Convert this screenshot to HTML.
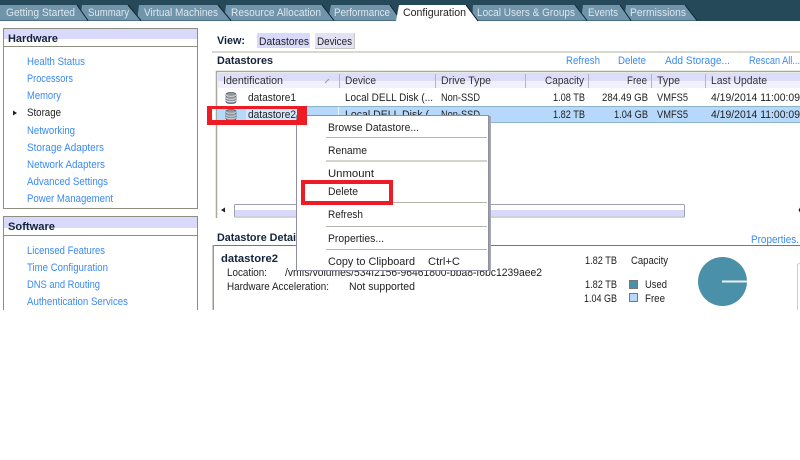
<!DOCTYPE html>
<html><head><meta charset="utf-8"><style>
html,body{margin:0;padding:0;background:#fff;width:800px;height:460px;overflow:hidden}
svg{display:block}
text{font-family:"Liberation Sans",sans-serif;font-size:11px;fill:#222;white-space:pre}
.t{fill:#dce7ee}
.b{font-weight:bold;fill:#14233c}
.l{fill:#3b8af0}
.h{fill:#333}
</style></head><body>
<svg width="800" height="460" viewBox="0 0 800 460" xmlns="http://www.w3.org/2000/svg">
<rect x="0" y="0" width="800" height="21" fill="#26495a"/>
<g fill="#7094aa">
<path d="M0 5H77L88 20.500H0Z"/>
<path d="M80 20.500L82 5H128L141 20.500Z"/>
<path d="M137 20.500L139 5H218L231 20.500Z"/>
<path d="M224 20.500L226 5H322L334 20.500Z"/>
<path d="M328 20.500L331 5H390L401 20.500Z"/>
<path d="M472 20.500L473 5H575L587 20.500Z"/>
<path d="M581 20.500L583 5H620L631 20.500Z"/>
<path d="M624 20.500L626 5H685L697 20.500Z"/>
</g>
<g stroke="#10242e" stroke-width="1" fill="none">
<path d="M77 5L88 20.500M128 5L141 20.500M218 5L231 20.500M322 5L334 20.500M390 5L401 20.500M575 5L587 20.500M620 5L631 20.500M685 5L697 20.500"/>
</g>
<path d="M396 21L399 5H466L478 21Z" fill="#fff"/>
<path d="M466 5L478 21" stroke="#111" stroke-width="1" fill="none"/>
<text lengthAdjust="spacingAndGlyphs" class="t" x="6" y="16" textLength="69">Getting Started</text>
<text lengthAdjust="spacingAndGlyphs" class="t" x="88" y="16" textLength="41">Summary</text>
<text lengthAdjust="spacingAndGlyphs" class="t" x="144" y="16" textLength="74">Virtual Machines</text>
<text lengthAdjust="spacingAndGlyphs" class="t" x="231" y="16" textLength="90">Resource Allocation</text>
<text lengthAdjust="spacingAndGlyphs" class="t" x="334" y="16" textLength="56">Performance</text>
<text lengthAdjust="spacingAndGlyphs" x="403" y="16" textLength="63">Configuration</text>
<text lengthAdjust="spacingAndGlyphs" class="t" x="477" y="16" textLength="98">Local Users &amp; Groups</text>
<text lengthAdjust="spacingAndGlyphs" class="t" x="588" y="16" textLength="30">Events</text>
<text lengthAdjust="spacingAndGlyphs" class="t" x="630" y="16" textLength="56">Permissions</text>

<rect x="3.500" y="28.500" width="194" height="180" fill="#fff" stroke="#8e8e80"/>
<rect x="4" y="29" width="193" height="10" fill="#d9d9fb"/>
<rect x="4" y="46" width="193" height="1" fill="#8e8e80"/>
<text lengthAdjust="spacingAndGlyphs" class="b" x="8" y="42" textLength="50">Hardware</text>
<text lengthAdjust="spacingAndGlyphs" class="l" x="27" y="65" textLength="58">Health Status</text>
<text lengthAdjust="spacingAndGlyphs" class="l" x="27" y="82" textLength="46">Processors</text>
<text lengthAdjust="spacingAndGlyphs" class="l" x="27" y="99" textLength="34">Memory</text>
<text lengthAdjust="spacingAndGlyphs" x="27" y="116" textLength="34">Storage</text>
<text lengthAdjust="spacingAndGlyphs" class="l" x="27" y="134" textLength="48">Networking</text>
<text lengthAdjust="spacingAndGlyphs" class="l" x="27" y="151" textLength="77">Storage Adapters</text>
<text lengthAdjust="spacingAndGlyphs" class="l" x="27" y="168" textLength="78">Network Adapters</text>
<text lengthAdjust="spacingAndGlyphs" class="l" x="27" y="185" textLength="81">Advanced Settings</text>
<text lengthAdjust="spacingAndGlyphs" class="l" x="27" y="202" textLength="86">Power Management</text>
<path d="M13 110.500L17 113L13 115.500Z" fill="#222"/>

<path d="M3.500 312V216.500H197.500V312" fill="#fff" stroke="#8e8e80"/>
<rect x="4" y="217" width="193" height="11" fill="#d9d9fb"/>
<rect x="4" y="235" width="193" height="1" fill="#8e8e80"/>
<text lengthAdjust="spacingAndGlyphs" class="b" x="8" y="230" textLength="47">Software</text>
<text lengthAdjust="spacingAndGlyphs" class="l" x="27" y="254" textLength="78">Licensed Features</text>
<text lengthAdjust="spacingAndGlyphs" class="l" x="27" y="271" textLength="81">Time Configuration</text>
<text lengthAdjust="spacingAndGlyphs" class="l" x="27" y="288" textLength="73">DNS and Routing</text>
<text lengthAdjust="spacingAndGlyphs" class="l" x="27" y="305" textLength="101">Authentication Services</text>

<text lengthAdjust="spacingAndGlyphs" class="b" x="217" y="44" textLength="28">View:</text>
<rect x="257" y="33" width="53" height="15" fill="#d9d9fb"/>
<rect x="315" y="33" width="39" height="15" fill="#e2e2f6"/>
<path d="M354.500 33V48.500H315" stroke="#c8c8c0" fill="none"/>
<text lengthAdjust="spacingAndGlyphs" x="259" y="45" textLength="50">Datastores</text>
<text lengthAdjust="spacingAndGlyphs" x="317" y="45" textLength="35">Devices</text>
<rect x="212" y="51" width="588" height="2" fill="#d8d8d0"/>
<text lengthAdjust="spacingAndGlyphs" class="b" x="217" y="64" textLength="56">Datastores</text>
<text lengthAdjust="spacingAndGlyphs" class="l" x="566" y="64" textLength="34">Refresh</text>
<text lengthAdjust="spacingAndGlyphs" class="l" x="618" y="64" textLength="28">Delete</text>
<text lengthAdjust="spacingAndGlyphs" class="l" x="665" y="64" textLength="65">Add Storage...</text>
<text lengthAdjust="spacingAndGlyphs" class="l" x="749" y="64" textLength="51">Rescan All...</text>

<path d="M216.500 218V71.500H800" fill="none" stroke="#a8a89c" stroke-width="1.500"/>
<rect x="218" y="73" width="582" height="8" fill="#dcdcfb"/>
<rect x="218" y="81" width="582" height="7" fill="#f1f1fd"/>
<g fill="#b4b4c4"><rect x="339" y="74" width="1" height="14"/><rect x="435" y="74" width="1" height="14"/><rect x="525" y="74" width="1" height="14"/><rect x="588" y="74" width="1" height="14"/><rect x="651" y="74" width="1" height="14"/><rect x="705" y="74" width="1" height="14"/></g>
<text lengthAdjust="spacingAndGlyphs" class="h" x="223" y="84" textLength="60">Identification</text>
<path d="M325 83L329 79" stroke="#999" fill="none"/>
<text lengthAdjust="spacingAndGlyphs" class="h" x="345" y="84" textLength="31">Device</text>
<text lengthAdjust="spacingAndGlyphs" class="h" x="441" y="84" textLength="50">Drive Type</text>
<text lengthAdjust="spacingAndGlyphs" class="h" x="545" y="84" textLength="39">Capacity</text>
<text lengthAdjust="spacingAndGlyphs" class="h" x="627" y="84" textLength="20">Free</text>
<text lengthAdjust="spacingAndGlyphs" class="h" x="657" y="84" textLength="23">Type</text>
<text lengthAdjust="spacingAndGlyphs" class="h" x="711" y="84" textLength="56">Last Update</text>

<text lengthAdjust="spacingAndGlyphs" x="248" y="101" textLength="48">datastore1</text>
<text lengthAdjust="spacingAndGlyphs" x="345" y="101" textLength="88">Local DELL Disk (...</text>
<text lengthAdjust="spacingAndGlyphs" x="441" y="101" textLength="39">Non-SSD</text>
<text lengthAdjust="spacingAndGlyphs" x="553" y="101" textLength="32">1.08 TB</text>
<text lengthAdjust="spacingAndGlyphs" x="602" y="101" textLength="46">284.49 GB</text>
<text lengthAdjust="spacingAndGlyphs" x="657" y="101" textLength="31">VMFS5</text>
<text lengthAdjust="spacingAndGlyphs" x="711" y="101" textLength="89">4/19/2014 11:00:09</text>

<rect x="217" y="107" width="583" height="15" fill="#b6d8fb"/>
<rect x="217" y="106" width="583" height="1" fill="#8db4c8"/>
<rect x="217" y="122" width="583" height="1" fill="#8db4c8"/>
<rect x="246" y="108" width="52" height="13" fill="#d4e6fb"/>
<rect x="338" y="107" width="1" height="15" fill="#eef6ff"/>
<text lengthAdjust="spacingAndGlyphs" x="248" y="118" textLength="48">datastore2</text>
<text lengthAdjust="spacingAndGlyphs" x="345" y="118" textLength="84">Local DELL Disk (</text>
<text lengthAdjust="spacingAndGlyphs" x="441" y="118" textLength="39">Non-SSD</text>
<text lengthAdjust="spacingAndGlyphs" x="553" y="118" textLength="32">1.82 TB</text>
<text lengthAdjust="spacingAndGlyphs" x="614" y="118" textLength="34">1.04 GB</text>
<text lengthAdjust="spacingAndGlyphs" x="657" y="118" textLength="31">VMFS5</text>
<text lengthAdjust="spacingAndGlyphs" x="711" y="118" textLength="89">4/19/2014 11:00:09</text>

<g fill="#8f969b" stroke="#555d62" stroke-width="0.8">
<path d="M226 94.500C226 91.800 236 91.800 236 94.500V101.500C236 104.200 226 104.200 226 101.500Z"/>
<path d="M226 94.500C226 96.800 236 96.800 236 94.500M226 97.500C226 99.800 236 99.800 236 97.500M226 100C226 102.300 236 102.300 236 100" fill="none" stroke="#e8ecef"/>
</g>
<g fill="#8f969b" stroke="#555d62" stroke-width="0.8">
<path d="M226 111.500C226 108.800 236 108.800 236 111.500V118.500C236 121.200 226 121.200 226 118.500Z"/>
<path d="M226 111.500C226 113.800 236 113.800 236 111.500M226 114.500C226 116.800 236 116.800 236 114.500M226 117C226 119.300 236 119.300 236 117" fill="none" stroke="#d8e4ee"/>
</g>

<rect x="234.500" y="204.500" width="450" height="12.500" rx="1" fill="#fff" stroke="#a0a0b4"/>
<rect x="235" y="210" width="449" height="6" fill="#d9d9fb"/>
<path d="M221 210L225 207.500V212.500Z" fill="#222"/>
<path d="M800 207.500L798.500 210L800 212.500Z" fill="#222"/>

<text lengthAdjust="spacingAndGlyphs" class="b" x="217" y="241" textLength="88">Datastore Details</text>
<text lengthAdjust="spacingAndGlyphs" class="l" x="751" y="243" textLength="48">Properties.</text>
<rect x="213" y="245" width="587" height="1" fill="#77776c"/>
<rect x="212.500" y="245" width="1.500" height="65" fill="#9a9a8e"/>
<text lengthAdjust="spacingAndGlyphs" class="b" x="221" y="262" textLength="57">datastore2</text>
<text lengthAdjust="spacingAndGlyphs" x="227" y="276" textLength="40">Location:</text>
<text lengthAdjust="spacingAndGlyphs" x="285" y="276" textLength="257">/vmfs/volumes/534f2156-96461800-bba8-f6bc1239aee2</text>
<text lengthAdjust="spacingAndGlyphs" x="227" y="290" textLength="102">Hardware Acceleration:</text>
<text lengthAdjust="spacingAndGlyphs" x="349" y="290" textLength="66">Not supported</text>

<text lengthAdjust="spacingAndGlyphs" x="585" y="264" textLength="32">1.82 TB</text>
<text lengthAdjust="spacingAndGlyphs" x="631" y="264" textLength="37">Capacity</text>
<text lengthAdjust="spacingAndGlyphs" x="585" y="288" textLength="32">1.82 TB</text>
<text lengthAdjust="spacingAndGlyphs" x="645" y="288" textLength="22">Used</text>
<text lengthAdjust="spacingAndGlyphs" x="584" y="302" textLength="33">1.04 GB</text>
<text lengthAdjust="spacingAndGlyphs" x="645" y="302" textLength="20">Free</text>
<rect x="629.500" y="280.500" width="8" height="8" fill="#4a90a9" stroke="#777"/>
<rect x="629.500" y="293.500" width="8" height="8" fill="#b6d8fb" stroke="#777"/>
<circle cx="722.500" cy="281.500" r="24.500" fill="#4a90a9"/>
<rect x="722" y="280.500" width="25" height="2" fill="#e8f2f5"/>
<path d="M797.500 310V265Q797.500 263.500 800 263.500" fill="none" stroke="#ccc"/>

<rect x="489" y="116" width="2" height="156" fill="#a8a8b4"/>
<rect x="296.500" y="115.500" width="192" height="155" fill="#fff" stroke="#8f8fa4"/>
<rect x="488" y="116" width="1.500" height="155" fill="#8f8fa4"/>
<rect x="326" y="137" width="161" height="1" fill="#b4b4a8"/>
<rect x="326" y="160" width="161" height="2" fill="#d4d4cc"/>
<rect x="326" y="202" width="161" height="1" fill="#b4b4a8"/>
<rect x="326" y="226" width="161" height="1" fill="#b4b4a8"/>
<rect x="326" y="249" width="161" height="1" fill="#b4b4a8"/>
<text lengthAdjust="spacingAndGlyphs" x="328" y="131" textLength="91">Browse Datastore...</text>
<text lengthAdjust="spacingAndGlyphs" x="328" y="154" textLength="39">Rename</text>
<text lengthAdjust="spacingAndGlyphs" x="328" y="177" textLength="46">Unmount</text>
<text lengthAdjust="spacingAndGlyphs" x="328" y="195" textLength="30">Delete</text>
<text lengthAdjust="spacingAndGlyphs" x="328" y="218" textLength="35">Refresh</text>
<text lengthAdjust="spacingAndGlyphs" x="328" y="242" textLength="56">Properties...</text>
<text lengthAdjust="spacingAndGlyphs" x="328" y="265" textLength="87">Copy to Clipboard</text>
<text lengthAdjust="spacingAndGlyphs" x="428" y="265" textLength="32">Ctrl+C</text>

<path fill-rule="evenodd" fill="#ed1c24" d="M207 106H307V125H207ZM212 109V120H297V109Z"/>
<path fill-rule="evenodd" fill="#ed1c24" d="M301 180H393V205H301ZM305 184V201H389V184Z"/>

<rect x="0" y="310" width="800" height="150" fill="#fff"/>
</svg>
</body></html>
